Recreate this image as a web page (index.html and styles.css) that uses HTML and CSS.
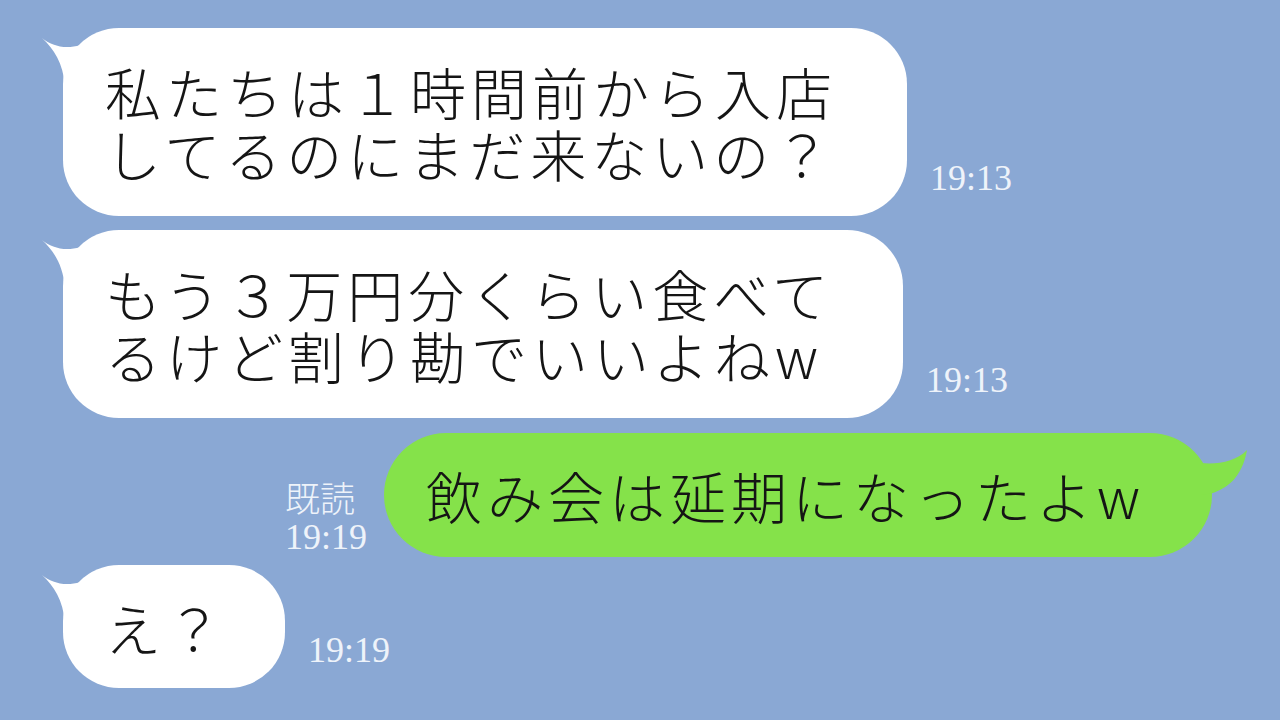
FILE: index.html
```html
<!DOCTYPE html>
<html lang="ja">
<head>
  <meta charset="UTF-8">
  <title>トーク</title>
  <link rel="stylesheet" href="styles.css">
</head>
<body>
  <div class="talk">

    <div class="row left">
      <div class="bubble white">
        <svg class="tail" viewBox="0 0 70 70"><path d="M3 10 C 15 20, 35 24, 55 10 L 55 62 L 26 58 C 24 35, 15 21, 3 10 Z"/></svg>
        <p>私たちは１時間前から入店<br>してるのにまだ来ないの？</p>
      </div>
      <span class="time">19:13</span>
    </div>

    <div class="row left">
      <div class="bubble white">
        <svg class="tail" viewBox="0 0 70 70"><path d="M3 10 C 15 20, 35 24, 55 10 L 55 62 L 26 58 C 24 35, 15 21, 3 10 Z"/></svg>
        <p>もう３万円分くらい食べて<br>るけど割り勘でいいよねw</p>
      </div>
      <span class="time">19:13</span>
    </div>

    <div class="row right">
      <div class="read">
        <span>既読</span>
        <span class="read-time">19:19</span>
      </div>
      <div class="bubble green">
        <svg class="tail" viewBox="0 0 60 70"><path d="M50 17 C 40 28, 20 32, 4 30 L 4 62 L 16 60 C 30 55, 45 45, 50 17 Z"/></svg>
        <p>飲み会は延期になったよw</p>
      </div>
    </div>

    <div class="row left close">
      <div class="bubble white short">
        <svg class="tail" viewBox="0 0 70 70"><path d="M3 10 C 15 20, 35 24, 55 10 L 55 62 L 26 58 C 24 35, 15 21, 3 10 Z"/></svg>
        <p>え？</p>
      </div>
      <span class="time">19:19</span>
    </div>

  </div>
</body>
</html>
```

FILE: styles.css
```css
body { margin: 0; background: #8aa8d4; font-family: "Noto Sans CJK JP", "Noto Sans", sans-serif; }
.talk { display: flex; flex-direction: column; gap: 14px; padding-top: 28px; height: 720px; box-sizing: border-box; overflow: hidden; }
.row { display: flex; align-items: flex-end; }
.row.left { padding-left: 63px; }
.row.right { justify-content: flex-end; padding-right: 68px; margin-top: 1px; }
.row.close { margin-top: -6px; }

.bubble { position: relative; padding: 32px 70px 32px 42px; border-radius: 56px; color: #151515; }
.bubble p { margin: 0; font-size: 56px; font-weight: 300; line-height: 62px; letter-spacing: 5px; white-space: nowrap; }
.bubble.white { background: #fff; }
.bubble.green { background: #85e24a; padding: 31px 67px 31px 42px; border-radius: 62px; }
.bubble.short { padding: 31px 58px 30px 42px; }

.tail { position: absolute; width: 70px; height: 70px; }
.white .tail { left: -24px; top: 0; fill: #fff; }
.green .tail { right: -45px; top: 0; width: 60px; fill: #85e24a; }

.time { margin: 0 0 20px 23px; font-family: "Liberation Serif", serif; font-size: 36px; line-height: 36px; color: #eef3fa; }
.read { display: flex; flex-direction: column; margin-right: 17px; color: #eef3fa; font-size: 35px; font-weight: 300; line-height: 40px; }
.read-time { font-family: "Liberation Serif", serif; font-size: 36px; }
```
